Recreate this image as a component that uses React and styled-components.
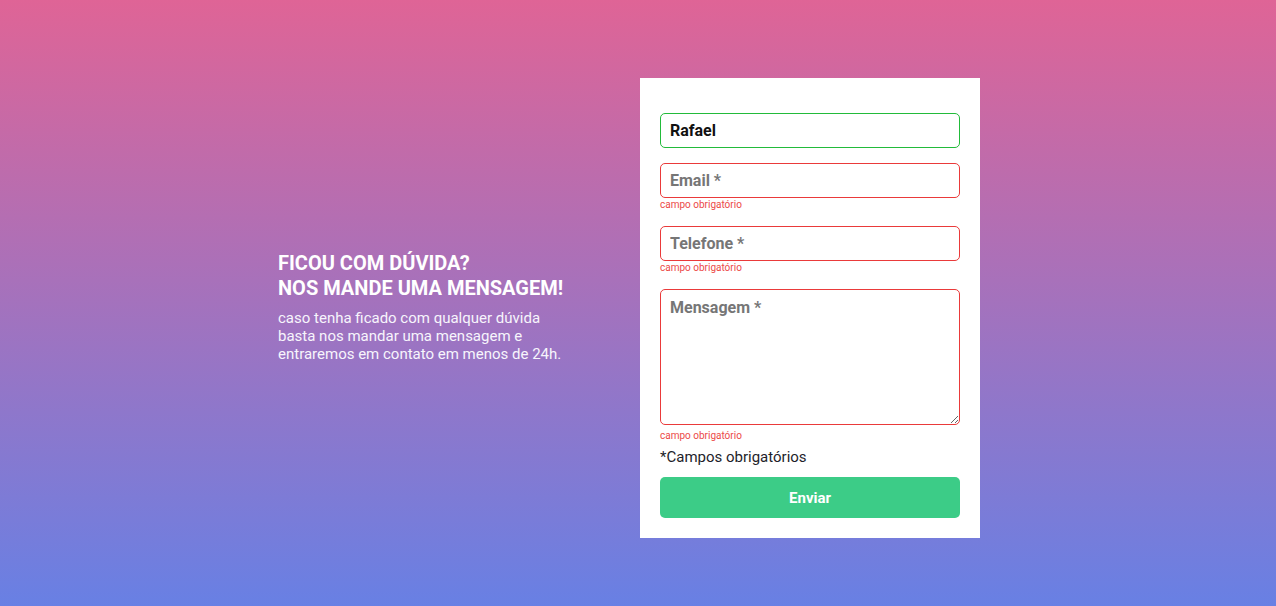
import React from "react";
import styled, { createGlobalStyle } from "styled-components";

const Global = createGlobalStyle`
  html, body { margin: 0; padding: 0; }
  body { font-family: Roboto, "Liberation Sans", sans-serif; }
  * { box-sizing: border-box; }
`;

const Page = styled.div`
  min-height: 606px;
  background: linear-gradient(to bottom, #df6496 0%, #6880e4 100%);
  padding-top: 78px;
  padding-bottom: 68px;
`;

const Wrapper = styled.div`
  width: 720px;
  margin: 0 auto;
  display: flex;
  align-items: center;
`;

const Intro = styled.div`
  flex: 1;
  color: #fff;
  padding-bottom: 3px;
`;

const Title = styled.h2`
  margin: 0 0 8px;
  font-size: 20px;
  line-height: 25px;
  font-weight: 700;
  text-transform: uppercase;
`;

const Text = styled.p`
  margin: 0;
  font-size: 15px;
  line-height: 18px;
  color: #f7f5fc;
  width: 300px;
`;

const Card = styled.form`
  width: 340px;
  margin-right: 18px;
  background: #fff;
  padding: 35px 20px 20px;
  display: flex;
  flex-direction: column;
`;

const Field = styled.div`
  display: flex;
  flex-direction: column;
  margin-bottom: ${(p) => (p.$last ? "0" : "15px")};
`;

const Input = styled.input`
  width: 100%;
  height: 35px;
  border: 1px solid ${(p) => (p.$valid ? "#22bb3a" : "#ea3a3a")};
  border-radius: 5px;
  padding: 0 9px;
  font-family: Roboto, "Liberation Sans", sans-serif;
  font-size: 16px;
  font-weight: 700;
  color: #111;
  outline: none;
  &::placeholder { color: #767676; opacity: 1; }
`;

const Area = styled.textarea`
  width: 100%;
  height: 136px;
  margin-bottom: 4px;
  border: 1px solid #ea3a3a;
  border-radius: 5px;
  padding: 8px 9px;
  font-family: Roboto, "Liberation Sans", sans-serif;
  font-size: 16px;
  font-weight: 700;
  color: #111;
  outline: none;
  resize: vertical;
  display: block;
  &::placeholder { color: #767676; opacity: 1; }
`;

const Error = styled.span`
  font-size: 10px;
  line-height: 12px;
  margin-top: 1px;
  color: #ec4a48;
`;

const Note = styled.p`
  margin: 5px 0 10px;
  font-size: 15px;
  line-height: 20px;
  color: #1e1e2a;
`;

const Button = styled.button`
  height: 41px;
  width: 100%;
  border: none;
  border-radius: 5px;
  background: #3ccc87;
  color: #fff;
  font-family: Roboto, "Liberation Sans", sans-serif;
  font-size: 15px;
  font-weight: 700;
  cursor: pointer;
`;

export default function App() {
  return (
    <>
      <Global />
      <Page>
        <Wrapper>
          <Intro>
            <Title>
              Ficou com dúvida?
              <br />
              Nos mande uma mensagem!
            </Title>
            <Text>
              caso tenha ficado com qualquer dúvida basta nos mandar uma
              mensagem e entraremos em contato em menos de 24h.
            </Text>
          </Intro>
          <Card onSubmit={(e) => e.preventDefault()}>
            <Field>
              <Input $valid defaultValue="Rafael" placeholder="Nome *" />
            </Field>
            <Field>
              <Input placeholder="Email *" />
              <Error>campo obrigatório</Error>
            </Field>
            <Field>
              <Input placeholder="Telefone *" />
              <Error>campo obrigatório</Error>
            </Field>
            <Field $last>
              <Area placeholder="Mensagem *" />
              <Error>campo obrigatório</Error>
            </Field>
            <Note>*Campos obrigatórios</Note>
            <Button type="submit">Enviar</Button>
          </Card>
        </Wrapper>
      </Page>
    </>
  );
}
